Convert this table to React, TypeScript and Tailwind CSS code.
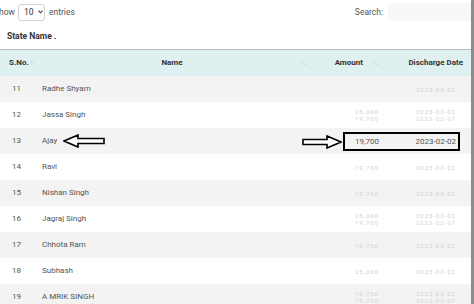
import React from 'react';

interface Row {
  readonly no: number;
  readonly name: string;
  readonly amount: string[];
  readonly date: string[];
}

const rows: Row[] = [
  { no: 11, name: 'Radhe Shyam', amount: ['-'], date: ['2023-02-02'] },
  { no: 12, name: 'Jassa Singh', amount: ['25,000', '19,700'], date: ['2023-02-02', '2023-02-01'] },
  { no: 13, name: 'Ajay', amount: ['19,700'], date: ['2023-02-02'] },
  { no: 14, name: 'Ravi', amount: ['19,700'], date: ['2023-02-02'] },
  { no: 15, name: 'Nishan Singh', amount: ['19,700'], date: ['2023-02-02'] },
  { no: 16, name: 'Jagraj Singh', amount: ['25,000', '19,700'], date: ['2023-02-02', '2023-02-01'] },
  { no: 17, name: 'Chhota Ram', amount: ['19,700'], date: ['2023-02-02'] },
  { no: 18, name: 'Subhash', amount: ['25,000'], date: ['2023-02-02'] },
  { no: 19, name: 'A MRIK SINGH', amount: ['19,700', '19,700'], date: ['2023-02-02', '2023-02-01'] },
];

function SortIcon(): React.JSX.Element {
  return <span className="text-[7px] tracking-[-1px] text-[#c8c8c8] font-normal">↑↓</span>;
}

function LeftArrow(): React.JSX.Element {
  return (
    <svg width="42" height="14" viewBox="0 0 42 14" className="absolute left-[63px] top-[6px]">
      <path d="M1 7 L15 1 L15 4.5 L41 4.5 L41 9.5 L15 9.5 L15 13 Z" fill="white" stroke="black" strokeWidth="1.6" strokeLinejoin="miter" />
    </svg>
  );
}

function RightArrow(): React.JSX.Element {
  return (
    <svg width="40" height="14" viewBox="0 0 40 14" className="absolute left-[302px] top-[7px]">
      <path d="M39 7 L25 1 L25 4.5 L1 4.5 L1 9.5 L25 9.5 L25 13 Z" fill="white" stroke="black" strokeWidth="1.6" strokeLinejoin="miter" />
    </svg>
  );
}

export default function App(): React.JSX.Element {
  return (
    <div className="w-[474px] h-[304px] overflow-hidden bg-white border-r-[3px] border-[#8c8c8c] text-[#555]" style={{ fontFamily: 'Roboto, "Liberation Sans", sans-serif' }}>
      <div className="flex items-center justify-between h-[23px] pt-[1px]">
        <div className="flex items-center gap-[3px] text-[8.5px] ml-[-6px]">
          <span>Show</span>
          <div className="flex items-center gap-[4px] w-[27px] h-[17px] border border-[#d4d4d4] rounded-[3px] pl-[5px] text-[#333] text-[8.5px]">
            <span>10</span>
            <svg width="5" height="4" viewBox="0 0 5 4"><path d="M0.5 0.7 L2.5 2.8 L4.5 0.7" fill="none" stroke="#333" strokeWidth="1.1" /></svg>
          </div>
          <span className="ml-[1px]">entries</span>
        </div>
        <div className="flex items-center gap-[5px] text-[8.5px]">
          <span>Search:</span>
          <div className="w-[83px] h-[18px] bg-[#f8f8f8]" />
        </div>
      </div>
      <div className="h-[26px] flex items-center pl-[7px] text-[8.5px] font-bold text-[#333]">State Name .</div>
      <div className="border-t border-[#b4b9ba] bg-[#dff0f1] h-[27px] flex items-center text-[8px] font-bold text-[#333]">
        <div className="w-[37px] pl-[9px] flex items-center gap-[1px]">S.No.<SortIcon /></div>
        <div className="w-[278px] flex items-center">
          <span className="flex-1 text-center pl-[6px]">Name</span>
          <span className="pr-[9px]"><SortIcon /></span>
        </div>
        <div className="w-[66px] flex items-center justify-end gap-[10px] pr-[3px]">
          <span>Amount</span>
          <SortIcon />
        </div>
        <div className="flex-1 text-right pr-[8px]">Discharge Date</div>
      </div>
      {rows.map((r, i) => {
        const focus = r.no === 13;
        return (
          <div key={r.no} className={`relative h-[26px] flex items-center text-[8px] ${i % 2 === 0 ? 'bg-[#f3f3f3]' : 'bg-white'}`}>
            <div className="w-[37px] pl-[12px]">{r.no}</div>
            <div className="w-[278px] pl-[5px]">{r.name}</div>
            <div className={`w-[64px] text-right flex flex-col items-end leading-[7px] ${focus ? 'text-[#555]' : 'text-[#d2d2d2] text-[6px] tracking-[1px]'}`}>
              {r.amount.map((a, k) => <span key={k}>{a}</span>)}
            </div>
            <div className={`flex-1 text-right pr-[15px] flex flex-col items-end leading-[7px] ${focus ? 'text-[#555]' : 'text-[#d2d2d2] text-[6px] tracking-[1px]'}`}>
              {r.date.map((d, k) => <span key={k}>{d}</span>)}
            </div>
            {focus && (
              <>
                <LeftArrow />
                <RightArrow />
                <div className="absolute left-[343px] top-[4px] w-[117px] h-[19px] border-2 border-black" />
              </>
            )}
          </div>
        );
      })}
    </div>
  );
}
